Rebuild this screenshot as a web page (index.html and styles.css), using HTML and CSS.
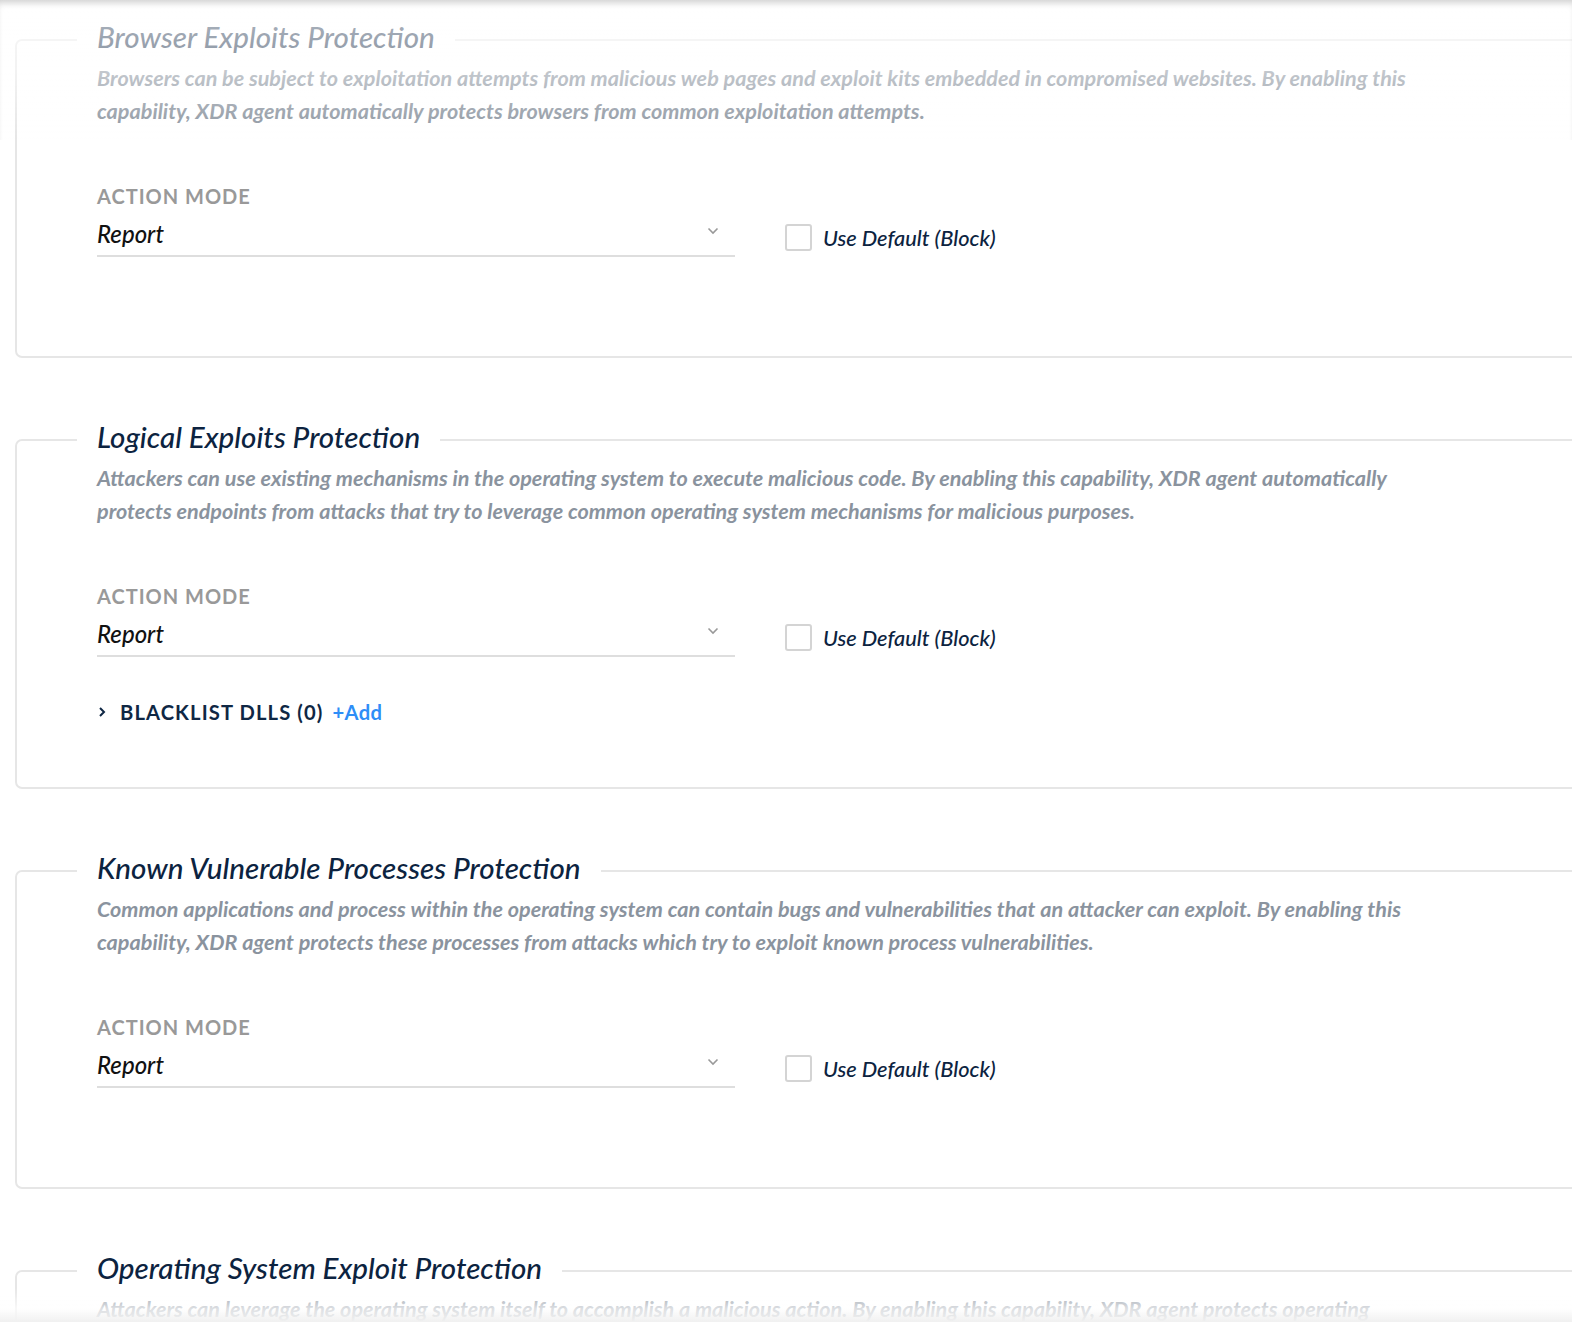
FILE: index.html
```html
<!DOCTYPE html>
<html lang="en">
<head>
  <meta charset="UTF-8">
  <title>Exploit Protection</title>
  <link rel="stylesheet" href="styles.css">
</head>
<body>
  <div class="fade-top"></div>

  <div class="sections">
    <fieldset class="module">
      <legend class="module-title">Browser Exploits Protection</legend>
      <p class="module-desc">Browsers can be subject to exploitation attempts from malicious web pages and exploit kits embedded in compromised websites. By enabling this capability, XDR agent automatically protects browsers from common exploitation attempts.</p>
      <div class="field-label">ACTION MODE</div>
      <div class="field-row">
        <div class="select">
          <span class="select-value">Report</span>
          <svg class="chevron" width="12" height="8" viewBox="0 0 12 8"><path d="M1.5 1.5 L6 6 L10.5 1.5" fill="none" stroke="#999" stroke-width="1.6"/></svg>
        </div>
        <label class="check"><span class="box"></span>Use Default (Block)</label>
      </div>
    </fieldset>

    <fieldset class="module">
      <legend class="module-title">Logical Exploits Protection</legend>
      <p class="module-desc">Attackers can use existing mechanisms in the operating system to execute malicious code. By enabling this capability, XDR agent automatically protects endpoints from attacks that try to leverage common operating system mechanisms for malicious purposes.</p>
      <div class="field-label">ACTION MODE</div>
      <div class="field-row">
        <div class="select">
          <span class="select-value">Report</span>
          <svg class="chevron" width="12" height="8" viewBox="0 0 12 8"><path d="M1.5 1.5 L6 6 L10.5 1.5" fill="none" stroke="#999" stroke-width="1.6"/></svg>
        </div>
        <label class="check"><span class="box"></span>Use Default (Block)</label>
      </div>
      <div class="list-toggle">
        <svg class="toggle-icon" width="10" height="12" viewBox="0 0 10 12"><path d="M3 2 L7 6 L3 10" fill="none" stroke="#0f2744" stroke-width="2"/></svg>
        <span class="toggle-text">BLACKLIST DLLS (0)</span>
        <a class="add-link">+Add</a>
      </div>
    </fieldset>

    <fieldset class="module">
      <legend class="module-title">Known Vulnerable Processes Protection</legend>
      <p class="module-desc">Common applications and process within the operating system can contain bugs and vulnerabilities that an attacker can exploit. By enabling this capability, XDR agent protects these processes from attacks which try to exploit known process vulnerabilities.</p>
      <div class="field-label">ACTION MODE</div>
      <div class="field-row">
        <div class="select">
          <span class="select-value">Report</span>
          <svg class="chevron" width="12" height="8" viewBox="0 0 12 8"><path d="M1.5 1.5 L6 6 L10.5 1.5" fill="none" stroke="#999" stroke-width="1.6"/></svg>
        </div>
        <label class="check"><span class="box"></span>Use Default (Block)</label>
      </div>
    </fieldset>

    <fieldset class="module">
      <legend class="module-title">Operating System Exploit Protection</legend>
      <p class="module-desc">Attackers can leverage the operating system itself to accomplish a malicious action. By enabling this capability, XDR agent protects operating system mechanisms from being abused by attackers.</p>
      <div class="field-label">ACTION MODE</div>
    </fieldset>
  </div>

  <div class="fade-bottom"></div>
</body>
</html>
```

FILE: styles.css
```css
body {
  margin: 0;
  padding: 0;
  background: #fff;
  font-family: 'Lato', 'Open Sans', sans-serif;
  color: #0f2744;
  height: 100vh;
  overflow: hidden;
}

.sections {
  padding-top: 19px;
  padding-left: 15px;
  margin-right: -40px;
}

.module {
  margin: 0 0 61px 0;
  padding: 0 0 0 80px;
  border: 2px solid #e6e6e6;
  border-radius: 7px;
}

.module-title {
  margin-left: -20px;
  padding: 0 20px 6px 20px;
  font-size: 29.6px;
  font-style: italic;
  font-weight: 500;
  line-height: 36px;
  color: #0c2340;
}

.module-desc {
  margin: 1px 0 0 0;
  max-width: 1330px;
  font-size: 21.6px;
  font-style: italic;
  font-weight: 700;
  line-height: 33px;
  color: #8a939e;
}

.field-label {
  margin-top: 56px;
  font-size: 20px;
  font-weight: 700;
  letter-spacing: 1px;
  color: #999;
  line-height: 24px;
}

.field-row {
  display: flex;
  align-items: flex-end;
  gap: 50px;
  margin-top: 8px;
  margin-bottom: 99px;
}

.select {
  width: 638px;
  height: 41px;
  display: flex;
  align-items: center;
  justify-content: space-between;
  border-bottom: 2px solid #dedede;
  box-sizing: border-box;
  padding: 0 16px 5px 0;
}

.select-value {
  font-size: 24px;
  font-style: italic;
  font-weight: 500;
  color: #111;
}

.chevron {
  margin-top: -4px;
}

.check {
  display: flex;
  align-items: center;
  gap: 11px;
  font-size: 21.8px;
  font-style: italic;
  font-weight: 500;
  color: #0c2340;
  margin-bottom: 6px;
}

.box {
  width: 23px;
  height: 23px;
  border: 2px solid #d4d4d4;
  border-radius: 3px;
}

.list-toggle {
  display: flex;
  align-items: center;
  margin-top: -56px;
  margin-bottom: 63px;
  font-size: 20.2px;
  font-weight: 700;
  letter-spacing: 1.1px;
}

.toggle-icon {
  margin-right: 13px;
}

.add-link {
  margin-left: 9px;
  color: #2e8ef7;
  letter-spacing: 0.4px;
  cursor: pointer;
}

.fade-top {
  position: fixed;
  top: 0;
  left: 0;
  right: 0;
  height: 140px;
  background: linear-gradient(to bottom, rgba(255,255,255,0.7) 0%, rgba(255,255,255,0.5) 50%, rgba(255,255,255,0) 100%);
  box-shadow: inset 0 6px 6px -3px rgba(0,0,0,0.18);
  z-index: 2;
}

.fade-bottom {
  position: fixed;
  bottom: 0;
  left: 0;
  right: 0;
  height: 34px;
  background: linear-gradient(to bottom, rgba(255,255,255,0) 0%, rgba(255,255,255,0.7) 60%, rgba(240,240,240,1) 100%);
  z-index: 2;
}
```
